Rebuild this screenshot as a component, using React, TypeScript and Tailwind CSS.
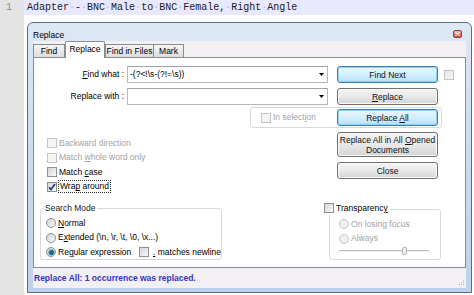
import React from 'react';

const LINE = 'Adapter - BNC Male to BNC Female, Right Angle';

function U({ children }: { children: React.ReactNode }) {
  return <span className="underline underline-offset-[1px]">{children}</span>;
}

function Check({ checked = false, disabled = false, className = '' }: { checked?: boolean; disabled?: boolean; className?: string }) {
  const look = disabled
    ? 'border-[#c4c4c4] bg-[#f4f4f4]'
    : 'border-[#8e8f8f] bg-linear-to-br from-[#d6d6d6] to-[#fafafa]';
  return (
    <div className={`w-[10px] h-[10px] shrink-0 border flex items-center justify-center ${look} ${className}`}>
      {checked && (
        <svg width="8" height="8" viewBox="0 0 8 8">
          <path d="M1 4.2 L3 6.5 L7 1" fill="none" stroke="#1b3a78" strokeWidth="1.7" />
        </svg>
      )}
    </div>
  );
}

function Radio({ checked = false, disabled = false }: { checked?: boolean; disabled?: boolean }) {
  const look = disabled
    ? 'border-[#c8c8c8] bg-[#f0f0f0]'
    : 'border-[#8e8f8f] bg-linear-to-br from-[#cfcfcf] to-[#fafafa]';
  return (
    <div className={`w-[10px] h-[10px] shrink-0 rounded-full border flex items-center justify-center ${look}`}>
      {checked && <div className="w-[5px] h-[5px] rounded-full bg-[#1f6582] shadow-[0_0_0_1px_#8fc6dc]" />}
    </div>
  );
}

function Btn({ children, focused = false, className = '' }: { children: React.ReactNode; focused?: boolean; className?: string }) {
  const look = focused
    ? 'border-[#3c7fb1] bg-linear-to-b from-[#eaf6fd] via-[#d5effc] to-[#b3e0f9] shadow-[inset_0_0_0_1px_#8fd0f3]'
    : 'border-[#707070] bg-linear-to-b from-[#f4f4f4] via-[#e9e9e9] to-[#d4d4d4] shadow-[inset_0_0_0_1px_#fbfbfb]';
  return (
    <div className={`w-[101px] shrink-0 rounded-[3px] border flex items-center justify-center text-center leading-[10px] text-[#111] ${look} ${className}`}>
      {children}
    </div>
  );
}

function Combo({ value }: { value: string }) {
  return (
    <div className="ml-[3px] w-[201px] h-[17px] shrink-0 bg-white border border-[#b5b8be] border-t-[#9ea2a9] flex items-center justify-between pl-[2px] pr-[3px]">
      <span>{value}</span>
      <svg width="5" height="3" viewBox="0 0 5 3">
        <polygon points="0,0 5,0 2.5,3" fill="#000" />
      </svg>
    </div>
  );
}

function Row({ children, className = '' }: { children: React.ReactNode; className?: string }) {
  return <div className={`h-[14.5px] flex items-center whitespace-nowrap ${className}`}>{children}</div>;
}

export default function App() {
  const words = LINE.split(' ');
  return (
    <div className="w-[474px] h-[295px] overflow-hidden bg-white flex flex-col font-['Liberation_Sans',Arial,sans-serif] text-[8.5px] text-black">
      <div className="flex h-[15px] shrink-0 font-['Liberation_Mono','Courier_New',monospace] text-[10px] leading-[15px]">
        <div className="w-[24px] bg-[#e4e4e4] text-[#8c8c8c] pl-[6px]">1</div>
        <div className="flex-1 bg-[#e8e8ff] pl-[3px] text-[#1a1a1a] whitespace-pre">
          {words.map((w, i) => (
            <React.Fragment key={i}>
              {i > 0 && <span className="text-[#b9b9c8]">·</span>}
              {w}
            </React.Fragment>
          ))}
        </div>
      </div>

      <div className="flex flex-1 min-h-0">
        <div className="w-[24px] bg-[#e4e4e4]" />
        <div className="pl-[3px] pt-[7px]">
          <div className="w-[445px] h-[271px] flex flex-col border border-[#5b6d86] rounded-t-[6px] bg-linear-to-b from-[#dde8f5] via-[#cbdbee] to-[#bcd2ec] px-[5px] pb-[4px]">
            {/* title bar */}
            <div className="h-[18px] shrink-0 flex items-end justify-between">
              <span className="leading-[10px] mb-[1px]">Replace</span>
              <div className="mb-[3px] mr-[4px] w-[9px] h-[8px] rounded-[2px] border border-[#9b3b3b] bg-linear-to-b from-[#eeb3a8] to-[#c8503f] flex items-center justify-center">
                <svg width="5" height="4" viewBox="0 0 5 4">
                  <path d="M0.5 0.5 L4.5 3.5 M4.5 0.5 L0.5 3.5" stroke="#fff" strokeWidth="1.1" />
                </svg>
              </div>
            </div>

            {/* client */}
            <div className="flex-1 min-h-0 flex flex-col bg-[#f2f0f2]">
              <div className="h-[16px] shrink-0 flex items-end">
                <div className="w-[32px] h-[13px] border border-b-0 border-[#898c95] bg-linear-to-b from-[#f4f4f4] to-[#dedede] flex items-center justify-center">Find</div>
                <div className="relative z-10 -mb-px w-[40px] h-[17px] border border-b-0 border-[#898c95] bg-white rounded-t-[2px] flex items-center justify-center pb-[2px]">Replace</div>
                <div className="w-[49px] h-[13px] border border-b-0 border-[#898c95] bg-linear-to-b from-[#f4f4f4] to-[#dedede] flex items-center justify-center">Find in Files</div>
                <div className="w-[30px] h-[13px] border border-b-0 border-l-0 border-[#898c95] bg-linear-to-b from-[#f4f4f4] to-[#dedede] flex items-center justify-center">Mark</div>
              </div>

              {/* tab panel */}
              <div className="flex-1 min-h-0 bg-white border border-[#898c95] pt-[8px] flex flex-col">
                <div className="flex items-center h-[17px]">
                  <div className="w-[90px] text-right"><U>F</U>ind what :</div>
                  <Combo value="-(?<!\s-(?!=\s))" />
                  <Btn focused className="ml-[9px] h-[17px]">Find Next</Btn>
                  <Check disabled className="ml-[6px] bg-linear-to-br from-[#e4e4e4] to-[#f6f6f6]" />
                </div>

                <div className="flex items-center h-[17px] mt-[5px]">
                  <div className="w-[90px] text-right">Replace with :</div>
                  <Combo value="" />
                  <Btn className="ml-[9px] h-[17px]"><span><U>R</U>eplace</span></Btn>
                </div>

                <div className="mt-[2px] ml-[216px] w-[192px] h-[21px] border border-[#d6dadf] rounded-[3px] flex items-center pl-[10px]">
                  <div className="w-[76px] flex items-center text-[#a3a3a3]">
                    <Check disabled />
                    <span className="ml-[2px]">In select<U>i</U>on</span>
                  </div>
                  <Btn focused className="h-[17px]"><span>Replace <U>A</U>ll</span></Btn>
                </div>

                <div className="flex h-[75px]">
                  <div className="ml-[13px] w-[290px] pt-[8px] flex flex-col">
                    <Row className="text-[#a3a3a3]"><Check disabled /><span className="ml-[2px]">Backward direction</span></Row>
                    <Row className="text-[#a3a3a3]"><Check disabled /><span className="ml-[2px]">Match <U>w</U>hole word only</span></Row>
                    <Row><Check /><span className="ml-[2px]">Match <U>c</U>ase</span></Row>
                    <Row>
                      <Check checked />
                      <div className="ml-px h-[13px] px-px border border-dotted border-[#333] flex items-center">
                        <span>Wra<U>p</U> around</span>
                      </div>
                    </Row>
                  </div>
                  <div className="flex flex-col">
                    <Btn className="mt-[4px] h-[25px]">
                      <span>Replace All in All <U>O</U>pened<br />Documents</span>
                    </Btn>
                    <Btn className="mt-[5px] h-[17px]">Close</Btn>
                  </div>
                </div>

                <div className="flex items-start">
                  <fieldset className="ml-[6px] w-[179px] h-[57px] shrink-0 border border-[#d6dadf] rounded-[3px] pl-[3px]">
                    <legend className="px-[1px] leading-[10px] text-[#1a1a1a]">Search Mode</legend>
                    <div className="pt-[3px] pl-[2px] flex flex-col">
                      <Row><Radio /><span className="ml-[2px]"><U>N</U>ormal</span></Row>
                      <Row><Radio /><span className="ml-[2px]">E<U>x</U>tended (\n, \r, \t, \0, \x...)</span></Row>
                      <Row>
                        <Radio checked />
                        <span className="ml-[2px] w-[81px] shrink-0">Re<U>g</U>ular expression</span>
                        <Check />
                        <span className="ml-[4px] shrink-0"><U>.</U> matches newline</span>
                      </Row>
                    </div>
                  </fieldset>

                  <fieldset className="ml-[107px] w-[112px] h-[57px] shrink-0 border border-[#d6dadf] rounded-[3px] pl-0">
                    <legend className="-ml-[6px] pr-[2px] leading-[10px]">
                      <span className="inline-flex items-center">
                        <Check />
                        <span className="ml-[2px]">Transparenc<U>y</U></span>
                      </span>
                    </legend>
                    <div className="pt-[2px] pl-[9px] flex flex-col text-[#a3a3a3]">
                      <Row><Radio disabled /><span className="ml-[2px]">On losing focus</span></Row>
                      <Row><Radio disabled /><span className="ml-[2px]">Always</span></Row>
                      <div className="h-[10px] w-[90px] flex items-center">
                        <div className="w-[63px] h-[2px] border-t border-[#bdbdbd] border-b border-b-[#eeeeee]" />
                        <div className="w-[5px] h-[8px] rounded-[2px] border border-[#b4b4b4] bg-[#f2f2f2]" />
                        <div className="flex-1 h-[2px] border-t border-[#bdbdbd] border-b border-b-[#eeeeee]" />
                      </div>
                    </div>
                  </fieldset>
                </div>
              </div>

              {/* status bar */}
              <div className="h-[20px] shrink-0 flex items-center justify-between pl-px">
                <span className="font-bold text-[#3434c6]">Replace All: 1 occurrence was replaced.</span>
                <svg width="7" height="7" viewBox="0 0 7 7" className="self-end mb-[2px] mr-px">
                  <g fill="#b8b8c0">
                    <rect x="5" y="1" width="1" height="1" />
                    <rect x="3" y="3" width="1" height="1" />
                    <rect x="5" y="3" width="1" height="1" />
                    <rect x="1" y="5" width="1" height="1" />
                    <rect x="3" y="5" width="1" height="1" />
                    <rect x="5" y="5" width="1" height="1" />
                  </g>
                </svg>
              </div>
            </div>
          </div>
        </div>
      </div>
    </div>
  );
}
